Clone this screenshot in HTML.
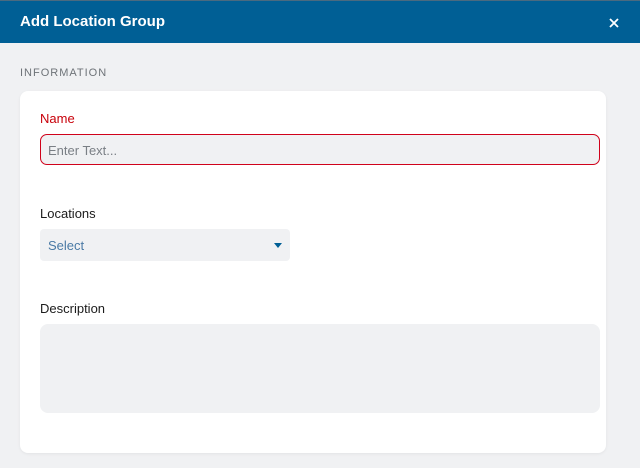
<!DOCTYPE html>
<html><head><style>
*{margin:0;padding:0;box-sizing:border-box}
body{width:640px;height:468px;background:#f0f1f3;font-family:"Liberation Sans",sans-serif;position:relative;overflow:hidden}
.hd{position:absolute;left:0;top:0;width:640px;height:43px;background:#005f95;border-top:1px solid #4a6a80}
.hd .t{position:absolute;left:20px;top:12px;color:#fff;font-size:15px;font-weight:bold}
.hd svg{position:absolute;left:609px;top:17px}
.sec{position:absolute;left:20px;top:67px;font-size:11px;letter-spacing:1px;color:#6e7378}
.card{position:absolute;left:20px;top:91px;width:586px;height:362px;background:#fff;border-radius:8px;box-shadow:0 1px 3px rgba(0,0,0,.06)}
.l{position:absolute;left:40px;font-size:13px;color:#1b1b1b}
.in{position:absolute;background:#f0f1f3;border-radius:6px}
</style></head><body>
<div class="hd"><div class="t">Add Location Group</div><svg width="10" height="10"><path d="M1 1L9 9M9 1L1 9" stroke="#fff" stroke-width="1.8"/></svg></div>
<div class="sec">INFORMATION</div>
<div class="card"></div>
<div class="l" style="top:111px;color:#c8000a">Name</div>
<div class="in" style="left:40px;top:134px;width:560px;height:31px;border:1px solid #d0021b;border-radius:7px"><span style="position:absolute;left:7px;top:8px;font-size:13px;color:#7a7f85">Enter Text...</span></div>
<div class="l" style="top:206px">Locations</div>
<div class="in" style="left:40px;top:229px;width:250px;height:32px;border-radius:4px"><span style="position:absolute;left:8px;top:9px;font-size:13px;color:#4a7aa5">Select</span>
<svg style="position:absolute;left:234px;top:14px" width="8" height="5"><path d="M0 0H8L4 5Z" fill="#005f95"/></svg></div>
<div class="l" style="top:301px">Description</div>
<div class="in" style="left:40px;top:324px;width:560px;height:89px;border-radius:8px"></div>
</body></html>
